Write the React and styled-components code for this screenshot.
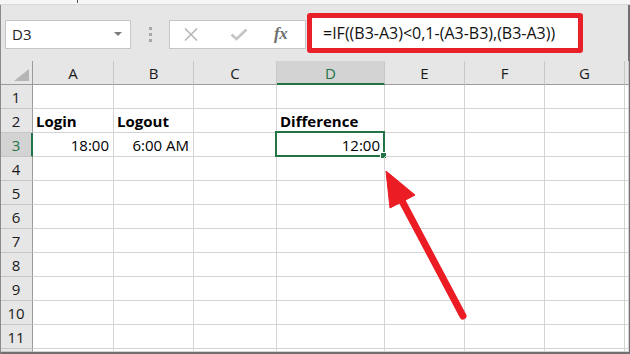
import React from "react";
import styled, { createGlobalStyle } from "styled-components";

const Global = createGlobalStyle`
  html, body { margin: 0; padding: 0; background: #ffffff; }
  * { box-sizing: border-box; }
`;

const Page = styled.div`
  position: relative;
  width: 630px;
  height: 354px;
  overflow: hidden;
  display: flex;
  flex-direction: column;
  font-family: "Open Sans", "Noto Sans", sans-serif;
`;

const TopStrip = styled.div`
  position: relative;
  height: 5px;
  background: #f6f6f6;
  border-bottom: 1px solid #d8d8d8;
`;

const Tick = styled.span`
  position: absolute;
  left: 77px;
  top: 0;
  width: 1px;
  height: 3px;
  background: #555;
`;

const Body = styled.div`
  flex: 1;
  display: flex;
  flex-direction: column;
  border-left: 1px solid #8a8a8a;
  border-right: 2px solid #707070;
  border-bottom: 2px solid #707070;
`;

const Toolbar = styled.div`
  height: 56px;
  background: #e6e6e6;
  display: flex;
  align-items: center;
  padding-left: 4px;
`;

const NameBox = styled.div`
  width: 126px;
  height: 29px;
  background: #ffffff;
  border: 1px solid #c6c6c6;
  display: flex;
  align-items: center;
  justify-content: space-between;
  padding: 0 8px 0 6px;
  font-size: 15px;
  color: #222;
  margin-top: 2px;
`;

const Caret = styled.span`
  width: 0;
  height: 0;
  border-left: 4px solid transparent;
  border-right: 4px solid transparent;
  border-top: 4px solid #7a7a7a;
`;

const Grip = styled.div`
  width: 38px;
  display: flex;
  flex-direction: column;
  align-items: center;
  gap: 3px;
  margin-top: 2px;
`;

const GripDot = styled.span`
  width: 3px;
  height: 3px;
  background: #a8a8a8;
`;

const Buttons = styled.div`
  width: 137px;
  height: 29px;
  background: #ffffff;
  border: 1px solid #c6c6c6;
  display: flex;
  align-items: center;
  padding-left: 14px;
  margin-top: 2px;
`;

const IconSlot = styled.span`
  width: ${(p) => p.$w}px;
  display: flex;
  align-items: center;
`;

const Fx = styled.span`
  font-family: "Liberation Serif", "DejaVu Serif", serif;
  font-style: italic;
  font-weight: bold;
  font-size: 17px;
  color: #6e6e6e;
  letter-spacing: -0.5px;
`;

const FormulaBox = styled.div`
  width: 276px;
  height: 40px;
  margin-left: 1px;
  border: 5px solid #e8202a;
  border-radius: 3px;
  background: #ffffff;
  display: flex;
  align-items: center;
  padding-left: 11px;
  font-size: 16px;
  color: #111;
  white-space: nowrap;
`;

const Sheet = styled.div`
  flex: 1;
  display: grid;
  grid-template-columns: 32px 81px 80px 83px 108px 80px 80px 80px 1fr;
  grid-template-rows: 24px repeat(11, 24px) 1fr;
  background: #ffffff;
`;

const Corner = styled.div`
  background: #e6e6e6;
  border-right: 1px solid #9b9b9b;
  border-bottom: 1px solid #9b9b9b;
  display: flex;
  align-items: flex-end;
  justify-content: flex-end;
  padding: 0 3px 3px 0;
`;

const ColHead = styled.div`
  background: ${(p) => (p.$active ? "#d3d3d3" : "#e6e6e6")};
  color: ${(p) => (p.$active ? "#217346" : "#1a1a1a")};
  border-right: 1px solid #c8c8c8;
  border-bottom: ${(p) => (p.$active ? "2px solid #217346" : "1px solid #9b9b9b")};
  display: flex;
  align-items: center;
  justify-content: center;
  font-size: 15px;
  padding-top: ${(p) => (p.$active ? "1px" : "0")};
`;

const RowHead = styled.div`
  background: ${(p) => (p.$active ? "#d3d3d3" : "#e6e6e6")};
  color: ${(p) => (p.$active ? "#217346" : "#1a1a1a")};
  border-right: ${(p) => (p.$active ? "2px solid #217346" : "1px solid #9b9b9b")};
  border-bottom: 1px solid #c6c6c6;
  display: flex;
  align-items: center;
  justify-content: center;
  font-size: 15px;
  padding-right: ${(p) => (p.$active ? "0" : "1px")};
`;

const Cell = styled.div`
  position: relative;
  border-right: 1px solid #d4d4d4;
  border-bottom: 1px solid #d4d4d4;
  display: flex;
  align-items: flex-end;
  justify-content: ${(p) => (p.$right ? "flex-end" : "flex-start")};
  padding: ${(p) => (p.$right ? "0 4px 0 0" : "0 0 0 3px")};
  font-size: 15px;
  font-weight: ${(p) => (p.$bold ? 700 : 400)};
  color: #000;
  white-space: nowrap;
  line-height: 21px;
`;

const Selection = styled.span`
  position: absolute;
  left: -2px;
  top: -2px;
  right: -1px;
  bottom: -1px;
  border: 2px solid #217346;
  pointer-events: none;
`;

const FillHandle = styled.span`
  position: absolute;
  right: -2px;
  bottom: -2px;
  width: 5px;
  height: 5px;
  background: #217346;
  outline: 1px solid #ffffff;
`;

const Arrow = styled.svg`
  position: absolute;
  left: 0;
  top: 0;
  pointer-events: none;
`;

const cols = ["A", "B", "C", "D", "E", "F", "G", ""];

const data = {
  2: { A: { t: "Login", b: true }, B: { t: "Logout", b: true }, D: { t: "Difference", b: true } },
  3: { A: { t: "18:00", r: true }, B: { t: "6:00 AM", r: true }, D: { t: "12:00", r: true, sel: true } },
};

export default function App() {
  const rows = Array.from({ length: 11 }, (_, i) => i + 1);
  return (
    <>
      <Global />
      <Page>
        <TopStrip>
          <Tick />
        </TopStrip>
        <Body>
          <Toolbar>
            <NameBox>
              <span>D3</span>
              <Caret />
            </NameBox>
            <Grip>
              <GripDot />
              <GripDot />
              <GripDot />
            </Grip>
            <Buttons>
              <IconSlot $w={46}>
                <svg width="14" height="13" viewBox="0 0 14 13">
                  <path d="M1 0.5 L13 12.5 M13 0.5 L1 12.5" stroke="#b8b8b8" strokeWidth="1.6" fill="none" />
                </svg>
              </IconSlot>
              <IconSlot $w={44}>
                <svg width="18" height="13" viewBox="0 0 18 13">
                  <path d="M1.5 6.5 L6.5 11 L16.5 1.5" stroke="#c4c4c4" strokeWidth="2.6" fill="none" />
                </svg>
              </IconSlot>
              <IconSlot $w={20}>
                <Fx>fx</Fx>
              </IconSlot>
            </Buttons>
            <FormulaBox>=IF((B3-A3)&lt;0,1-(A3-B3),(B3-A3))</FormulaBox>
          </Toolbar>
          <Sheet>
            <Corner>
              <svg width="15" height="12" viewBox="0 0 15 12">
                <polygon points="15,0 15,12 0,12" fill="#b5b5b5" />
              </svg>
            </Corner>
            {cols.map((c, i) => (
              <ColHead key={"h" + i} $active={c === "D"}>
                {c}
              </ColHead>
            ))}
            {rows.map((r) => (
              <React.Fragment key={r}>
                <RowHead $active={r === 3}>{r}</RowHead>
                {cols.map((c, i) => {
                  const d = data[r] && data[r][c];
                  return (
                    <Cell key={r + "-" + i} $bold={d && d.b} $right={d && d.r}>
                      {d ? d.t : null}
                      {d && d.sel ? (
                        <>
                          <Selection />
                          <FillHandle />
                        </>
                      ) : null}
                    </Cell>
                  );
                })}
              </React.Fragment>
            ))}
            <RowHead />
            {cols.map((c, i) => (
              <Cell key={"last" + i} />
            ))}
          </Sheet>
        </Body>
        <Arrow width="630" height="354" viewBox="0 0 630 354">
          <line x1="463" y1="316" x2="402" y2="201" stroke="#ec1c24" strokeWidth="7" strokeLinecap="round" />
          <polygon points="386,171 390,208 415,195" fill="#ec1c24" stroke="#ec1c24" strokeWidth="1" strokeLinejoin="round" />
        </Arrow>
      </Page>
    </>
  );
}
